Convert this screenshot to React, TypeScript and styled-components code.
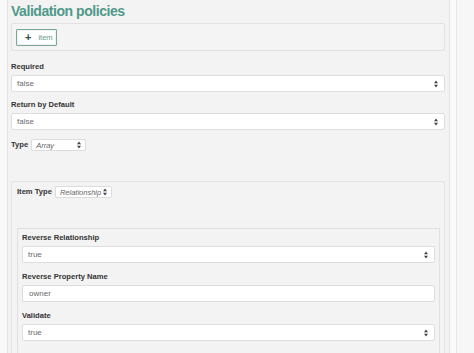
import styled, { createGlobalStyle } from 'styled-components';

const GlobalStyle = createGlobalStyle`
  html, body {
    margin: 0;
    padding: 0;
    background: #f7f7f7;
    font-family: "Liberation Sans", Arial, Helvetica, sans-serif;
  }
`;

const teal = '#4f998a';

const Arrows = () => (
  <svg width="4" height="8" viewBox="0 0 4 8">
    <path d="M0 3.2 L2 0.6 L4 3.2 Z M0 4.8 L2 7.4 L4 4.8 Z" fill="#444" />
  </svg>
);

const Field = ({ label, value }: { label: string; value: string }) => (
  <FieldGroup>
    <Label>{label}</Label>
    <SelectBox>
      <span>{value}</span>
      <Arrows />
    </SelectBox>
  </FieldGroup>
);

const App = () => {
  return (
    <Shell>
      <GlobalStyle />
      <Gutter />
      <Main>
        <Title>Validation policies</Title>
        <Panel>
          <AddButton>
            <b>+</b>
            <span>item</span>
          </AddButton>
        </Panel>

        <Field label="Required" value="false" />
        <Field label="Return by Default" value="false" />

        <InlineRow>
          <Label>Type</Label>
          <MiniSelect width={55}>
            <span>Array</span>
            <Arrows />
          </MiniSelect>
        </InlineRow>

        <GroupBox>
          <InlineRow>
            <Label>Item Type</Label>
            <MiniSelect width={57}>
              <span>Relationship</span>
              <Arrows />
            </MiniSelect>
          </InlineRow>

          <InnerBox>
            <Field label="Reverse Relationship" value="true" />
            <FieldGroup>
              <Label>Reverse Property Name</Label>
              <TextInput readOnly value="owner" />
            </FieldGroup>
            <Field label="Validate" value="true" />
          </InnerBox>
        </GroupBox>
      </Main>
      <Rail />
    </Shell>
  );
};

export default App;

const Shell = styled.div`
  display: flex;
  height: 100vh;
  overflow: hidden;
`;

const Gutter = styled.div`
  width: 7px;
  flex: none;
  background: #f8f8f8;
  border-right: 1px solid #e4e4e4;
`;

const Main = styled.div`
  width: 434px;
  flex: none;
  padding: 0 4px 0 3px;
  background: #f3f3f3;
  border-right: 1px solid #e2e2e2;
`;

const Rail = styled.div`
  width: 6px;
  flex: none;
  background: #fafafa;
  border-right: 1px solid #e6e6e6;
`;

const Title = styled.h2`
  margin: 0 0 4px;
  padding-top: 3px;
  font-size: 14px;
  line-height: 16px;
  letter-spacing: -0.45px;
  font-weight: bold;
  color: ${teal};
`;

const Panel = styled.div`
  border: 1px solid #e2e2e2;
  border-radius: 2px;
  padding: 5px 4px 4px;
  background: #f4f4f4;
`;

const AddButton = styled.div`
  display: flex;
  align-items: center;
  gap: 7px;
  box-sizing: border-box;
  width: 41px;
  height: 17px;
  padding-left: 8px;
  background: #fff;
  border: 1px solid #78a89d;
  border-radius: 1px;
  box-shadow: inset 0 0 0 1px #eef3f2;

  b {
    font-size: 11px;
    line-height: 11px;
    color: #2f4f49;
  }
  span {
    font-size: 7.5px;
    color: #6f9a90;
  }
`;

const FieldGroup = styled.div`
  margin-top: 8px;

  ${Panel} + & {
    margin-top: 11px;
  }
`;

const Label = styled.div`
  font-size: 7.6px;
  line-height: 10px;
  font-weight: bold;
  color: #333;
  margin-bottom: 3px;
`;

const SelectBox = styled.div`
  display: flex;
  align-items: center;
  justify-content: space-between;
  height: 17px;
  box-sizing: border-box;
  padding: 0 6px 0 5px;
  background: #fff;
  border: 1px solid #dedede;
  border-radius: 2px;
  font-size: 8px;
  color: #6b6b6b;
`;

const TextInput = styled.input`
  display: block;
  width: 100%;
  height: 17px;
  box-sizing: border-box;
  margin: 0;
  padding: 0 5px 0 6px;
  background: #fff;
  border: 1px solid #dcdcdc;
  border-radius: 2px;
  font-family: inherit;
  font-size: 8px;
  color: #6b6b6b;
  outline: none;
`;

const InlineRow = styled.div`
  display: flex;
  align-items: center;
  gap: 3px;
  margin-top: 9px;

  ${Label} {
    margin-bottom: 0;
  }
`;

const MiniSelect = styled.div<{ width: number }>`
  display: flex;
  align-items: center;
  justify-content: space-between;
  width: ${(p) => p.width}px;
  height: 12px;
  box-sizing: border-box;
  padding: 0 4px;
  background: #fff;
  border: 1px solid #dcdcdc;
  border-radius: 2px;
  font-size: 7.5px;
  font-style: italic;
  color: #666;
`;

const GroupBox = styled.div`
  margin-top: 30px;
  border: 1px solid #e2e2e2;
  border-bottom: none;
  border-radius: 2px 2px 0 0;
  padding: 4px 4px 0 5px;
  min-height: 200px;

  & > ${InlineRow} {
    margin-top: 0;
  }
`;

const InnerBox = styled.div`
  margin-top: 30px;
  border: 1px solid #e0e0e0;
  border-bottom: none;
  padding: 0 4px 20px 4px;

  ${FieldGroup} {
    margin-top: 9px;
  }
  ${FieldGroup}:first-child {
    margin-top: 4px;
  }
`;
